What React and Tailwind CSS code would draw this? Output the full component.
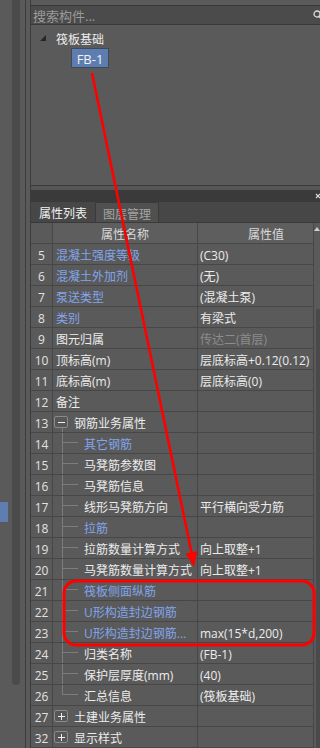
import React from 'react';

const rows = [
  { n: 5, name: '混凝土强度等级', value: '(C30)', blue: true },
  { n: 6, name: '混凝土外加剂', value: '(无)', blue: true },
  { n: 7, name: '泵送类型', value: '(混凝土泵)', blue: true },
  { n: 8, name: '类别', value: '有梁式', blue: true },
  { n: 9, name: '图元归属', value: '传达二(首层)', dim: true },
  { n: 10, name: '顶标高(m)', value: '层底标高+0.12(0.12)' },
  { n: 11, name: '底标高(m)', value: '层底标高(0)' },
  { n: 12, name: '备注', value: '' },
  { n: 13, name: '钢筋业务属性', group: 'open' },
  { n: 14, name: '其它钢筋', child: true, blue: true },
  { n: 15, name: '马凳筋参数图', child: true },
  { n: 16, name: '马凳筋信息', child: true },
  { n: 17, name: '线形马凳筋方向', value: '平行横向受力筋', child: true },
  { n: 18, name: '拉筋', child: true, blue: true },
  { n: 19, name: '拉筋数量计算方式', value: '向上取整+1', child: true },
  { n: 20, name: '马凳筋数量计算方式', value: '向上取整+1', child: true },
  { n: 21, name: '筏板侧面纵筋', child: true, blue: true },
  { n: 22, name: 'U形构造封边钢筋', child: true, blue: true },
  { n: 23, name: 'U形构造封边钢筋...', value: 'max(15*d,200)', child: true, blue: true },
  { n: 24, name: '归类名称', value: '(FB-1)', child: true },
  { n: 25, name: '保护层厚度(mm)', value: '(40)', child: true },
  { n: 26, name: '汇总信息', value: '(筏板基础)', child: true, last: true },
  { n: 27, name: '土建业务属性', group: 'closed' },
  { n: 32, name: '显示样式', group: 'closed' },
];

function Box({ open }) {
  return (
    <div className="flex h-[12px] w-[14px] items-center justify-center rounded-[2px] border border-[#8a8a8a] bg-[#575757]">
      <div className="relative flex h-[8px] w-[8px] items-center justify-center">
        <div className="h-px w-[7px] bg-[#f0f0f0]" />
        {!open && <div className="absolute h-[7px] w-px bg-[#f0f0f0]" />}
      </div>
    </div>
  );
}

function NameCell({ row }) {
  const color = row.blue ? 'text-[#82a5ec]' : 'text-[#ececec]';
  if (row.group) {
    return (
      <div className="flex h-full w-[145px] items-stretch border-r border-[#474747]">
        <div className="ml-px flex w-[14px] flex-col">
          <div className="flex-1" />
          <Box open={row.group === 'open'} />
          <div className="flex-1">
            {row.group === 'open' && <div className="ml-[8px] h-full border-l border-[#7c7c7c]" />}
          </div>
        </div>
        <span className="ml-[6px] mt-[4px] self-center whitespace-nowrap text-[#ececec]">{row.name}</span>
      </div>
    );
  }
  if (row.child) {
    return (
      <div className="flex h-full w-[145px] items-stretch border-r border-[#474747]">
        <div className="ml-[9px] flex w-[16px] flex-col">
          <div className="h-[10px] border-b border-l border-[#7c7c7c]" />
          <div className={`flex-1 ${row.last ? '' : 'border-l border-[#7c7c7c]'}`} />
        </div>
        <span className={`ml-[6px] mt-[4px] self-center whitespace-nowrap ${color}`}>{row.name}</span>
      </div>
    );
  }
  return (
    <div className="flex h-full w-[145px] items-center border-r border-[#474747] pl-[3px] pt-[4px]">
      <span className={`whitespace-nowrap ${color}`}>{row.name}</span>
    </div>
  );
}

function Row({ row }) {
  return (
    <div className="flex h-[21px] items-stretch border-b border-[#474747]">
      <div className="flex w-[22px] items-center justify-center border-r border-[#474747] pt-[4px] text-[#e2e2e2]">{row.n}</div>
      <NameCell row={row} />
      <div className={`flex w-[116px] items-center overflow-hidden whitespace-nowrap border-r border-[#474747] pl-[2px] pt-[4px] ${row.dim ? 'text-[#8c8c8c]' : 'text-[#ececec]'}`}>
        {row.value}
      </div>
    </div>
  );
}

export default function App() {
  return (
    <div className="relative flex h-[748px] w-[320px] overflow-hidden bg-[#5a5a5a] font-['Open_Sans','Noto_Sans_CJK_SC',sans-serif] text-[12px] leading-none">
      {/* left edge strip */}
      <div className="flex h-full w-[31px] shrink-0">
        <div className="w-[12px]">
          <div className="mt-[502px] h-[20px] w-[8px] bg-[#5f7db0]" />
        </div>
        <div className="w-[8px]">
          <div className="h-[685px] rounded-b-[4px] bg-[#4b4b4b]" />
        </div>
        <div className="w-[5px]" />
        <div className="w-px bg-[#3c3c3c]" />
        <div className="w-[4px]" />
        <div className="w-px bg-[#3c3c3c]" />
      </div>

      <div className="flex min-w-0 flex-1 flex-col">
        <div className="h-[5px]" />
        {/* search */}
        <div className="flex h-[20px] items-center justify-between border-y border-[#383838] bg-[#4b4b4b] pl-[2px]">
          <span className="pt-[3px] text-[13px] text-[#9a9a9a]">搜索构件...</span>
          <svg width="9" height="10" viewBox="0 0 9 10" className="-mr-[2px]">
            <circle cx="4" cy="4" r="3" fill="none" stroke="#d8d8d8" strokeWidth="1.3" />
            <line x1="6.2" y1="6.4" x2="9" y2="9.4" stroke="#d8d8d8" strokeWidth="1.6" />
          </svg>
        </div>

        {/* tree */}
        <div className="flex h-[161px] flex-col pt-[6px]">
          <div className="flex h-[14px] items-center pl-[9px]">
            <svg width="6" height="6" viewBox="0 0 6 6">
              <polygon points="6,0 6,6 0,6" fill="#262626" />
            </svg>
            <span className="ml-[10px] mt-[4px] text-[#ececec]">筏板基础</span>
          </div>
          <div className="ml-[40px] mt-[3px] flex h-[20px] w-[38px] items-center justify-center border border-[#3e4a5c] bg-[#5d7db1] pt-[3px] text-[13px] text-[#f2f2f2]">
            FB-1
          </div>
        </div>

        <div className="h-px bg-[#3a3a3a]" />
        <div className="h-[4px] bg-[#565656]" />
        {/* title bar */}
        <div className="flex h-[12px] items-center justify-end bg-[#3a3a3a]">
          <svg width="5" height="6" viewBox="0 0 5 6">
            <path d="M1 1 L5 5 M5 1 L1 5" stroke="#dcdcdc" strokeWidth="1.2" />
          </svg>
        </div>
        {/* tabs */}
        <div className="flex h-[21px] items-end border-b border-[#3a3a3a] bg-[#474747]">
          <div className="flex h-[20px] w-[64px] items-center justify-center pt-[4px] text-[#f2f2f2]">属性列表</div>
          <div className="flex h-[20px] w-[64px] items-center justify-center border-x border-t border-[#3a3a3a] bg-[#505050] pt-[4px] text-[#a4a4a4]">图层管理</div>
        </div>

        {/* table */}
        <div className="flex flex-1">
          <div className="flex w-[283px] flex-col">
            <div className="flex h-[21px] items-stretch border-b border-[#474747] bg-[#5e5e5e]">
              <div className="w-[22px] border-r border-[#474747] bg-[#5a5a5a]" />
              <div className="flex w-[145px] items-center justify-center border-r border-[#474747] pt-[4px] text-[#dadada]">属性名称</div>
              <div className="flex w-[116px] items-center border-r border-[#474747] pl-[50px] pt-[4px] text-[#dadada]">属性值</div>
            </div>
            {rows.map(r => (
              <Row key={r.n} row={r} />
            ))}
          </div>
          <div className="flex w-[6px] flex-col">
            <svg width="6" height="14" viewBox="0 0 6 14" className="mt-px">
              <polygon points="3,3 6,7 0,7" fill="#cfcfcf" />
            </svg>
            <div className="h-[71px]" />
            <div className="ml-[2px] flex-1 bg-[#4a4a4a]" />
          </div>
        </div>
      </div>

      {/* red annotation */}
      <svg className="pointer-events-none absolute inset-0" width="320" height="748" viewBox="0 0 320 748">
        <line x1="92" y1="73" x2="191.6" y2="553" stroke="#ff0000" strokeWidth="2.6" />
        <polygon points="185.5,553.5 197.5,551 194,567" fill="#ff0000" />
        <rect x="64" y="581" width="250" height="64" rx="12" fill="none" stroke="#ff0000" strokeWidth="3" />
      </svg>
    </div>
  );
}
